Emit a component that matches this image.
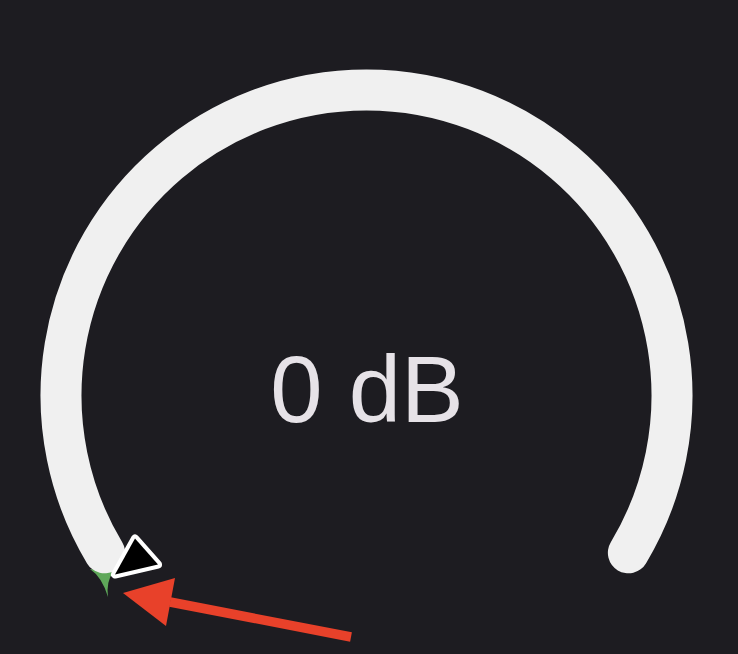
import React from "react";

const CX = 366.5;
const CY = 395.5;
const R = 305.5;
const END_DEG = 31;

function polar(deg: number) {
  const a = (deg * Math.PI) / 180;
  return { x: CX + R * Math.cos(a), y: CY + R * Math.sin(a) };
}

export default function App() {
  const start = polar(180 - END_DEG);
  const end = polar(END_DEG);
  const track = `M ${start.x} ${start.y} A ${R} ${R} 0 1 1 ${end.x} ${end.y}`;
  const thumb = "135,538.5 115,574.5 158,564.5";

  return (
    <div className="w-[738px] h-[654px] bg-[#1d1c21] overflow-hidden">
      <svg width="738" height="654" viewBox="0 0 738 654" className="block">
        {/* value sliver under the track start */}
        <path d="M 90 569 Q 102 577 108 597 Q 106 582 113 572 Z" fill="#5fa85a" />
        {/* gauge track */}
        <path d={track} fill="none" stroke="#f0f0f0" strokeWidth="41" strokeLinecap="round" />
        {/* thumb marker: white rim, black body */}
        <polygon points={thumb} fill="#ffffff" stroke="#ffffff" strokeWidth="8" strokeLinejoin="round" />
        <polygon points={thumb} fill="#000000" stroke="none" />
        {/* readout */}
        <text
          x="367"
          y="422"
          textAnchor="middle"
          fill="#e6e2e7"
          fontSize="94"
          className="font-['Liberation_Sans',Arial,sans-serif]"
        >
          0 dB
        </text>
        {/* pointer arrow */}
        <line x1="351" y1="637" x2="170" y2="602" stroke="#e8412a" strokeWidth="9.5" />
        <polygon points="123,593 175,578 166,626" fill="#e8412a" />
      </svg>
    </div>
  );
}
